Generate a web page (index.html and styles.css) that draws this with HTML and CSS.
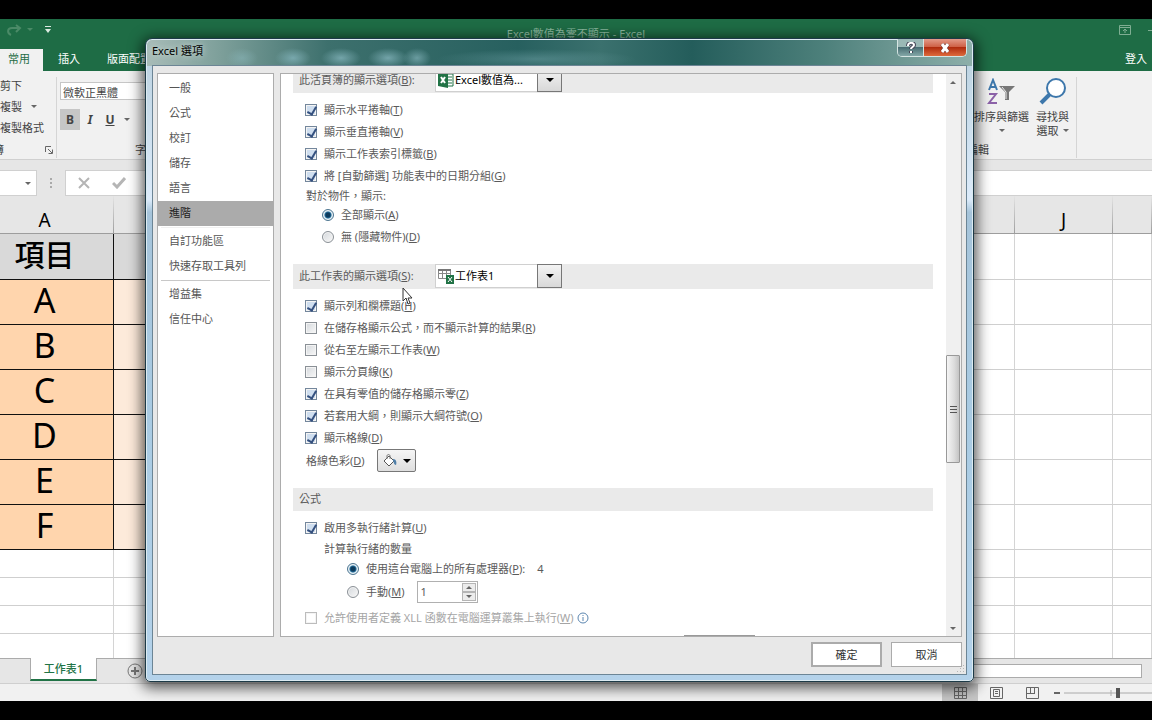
FILE: index.html
```html
<!DOCTYPE html>
<html lang="zh-Hant">
<head>
<meta charset="utf-8">
<title>Excel數值為零不顯示 - Excel</title>
<link rel="stylesheet" href="styles.css">
</head>
<body>
<div class="app">
  <header class="titlebar">
    <div class="quick">
      <svg width="18" height="12" viewBox="0 0 18 12" fill="none" stroke="#4b8a67" stroke-width="2"><path d="M4 11C0 9 0 4 5 4h7M9 1l4 3-4 4"/></svg>
      <i class="caret caret-dim"></i>
      <svg class="quick-more" width="6" height="8" viewBox="0 0 6 8" fill="#dcebe2"><path d="M0 0h6v1H0zM0 3h6L3 7z"/></svg>
    </div>
    <div class="doc-title">Excel數值為零不顯示 - Excel</div>
    <div class="win-tools">
      <svg width="12" height="10" viewBox="0 0 12 10" fill="none" stroke="#7fae93"><path d="M.5 .5h11v9H.5zM.5 2.500h11M6 8V4M4 6l2-2 2 2"/></svg>
      <svg width="4" height="10" viewBox="0 0 4 10"><path d="M0 5h4v1H0z" fill="#7fae93"/></svg>
    </div>
  </header>
  <nav class="tabs">
    <button class="tab tab-on">常用</button>
    <button class="tab">插入</button>
    <button class="tab">版面配置</button>
    <button class="tab signin">登入</button>
  </nav>
  <section class="ribbon">
    <div class="group clip">
      <button class="tool">剪下</button>
      <button class="tool">複製<i class="caret"></i></button>
      <button class="tool">複製格式</button>
      <div class="clip-foot"><span>簿</span>
        <svg width="8" height="8" viewBox="0 0 8 8" fill="none" stroke="#666"><path d="M.5 6V.5H6M3 3l4 4M7.500 3.500v4h-4"/></svg>
      </div>
    </div>
    <div class="group font">
      <input class="font-name" aria-label="字型" value="微軟正黑體">
      <div class="styles">
        <button class="sty sty-b">B</button><button class="sty sty-i">I</button><button class="sty sty-u">U</button><i class="caret"></i>
      </div>
      <div class="font-foot">字型</div>
    </div>
    <div class="group edit">
      <div class="edit-tools">
        <button class="big">
          <svg width="30" height="28" viewBox="0 0 30 28"><g fill="none" stroke-width="2"><path d="M2 12L6 2l4 10M3 9h6" stroke="#3d77ab"/><path d="M2 16h7L2 25h8" stroke="#8c62a8"/></g><path d="M12 8h16l-6 6v8h-4v-8z" fill="#777"/><path d="M15 9l4 5v7" stroke="#eee" fill="none"/></svg>
          <span>排序與篩選</span><i class="caret"></i>
        </button>
        <button class="big">
          <svg width="28" height="28" viewBox="0 0 28 28"><path d="M11 16L2 25" stroke="#3d77ab" stroke-width="4"/><circle cx="17" cy="10" r="9" fill="#fff" stroke="#3d77ab" stroke-width="2"/></svg>
          <span>尋找與</span><span class="with-caret">選取<i class="caret"></i></span>
        </button>
      </div>
      <div class="edit-foot">編輯</div>
    </div>
  </section>
  <section class="formula">
    <div class="name-box"><i class="caret"></i></div>
    <div class="dots"><i></i><i></i><i></i></div>
    <div class="formula-box">
      <svg width="12" height="12" viewBox="0 0 12 12" fill="none" stroke="#b5b5b5" stroke-width="2"><path d="M1 1l10 10M11 1L1 11"/></svg>
      <svg width="14" height="12" viewBox="0 0 14 12" fill="none" stroke="#b5b5b5" stroke-width="3"><path d="M1 6l4 4 8-9"/></svg>
    </div>
  </section>
  <main class="sheet">
    <table class="cells">
      <colgroup><col class="col-a"><col><col><col class="col-j"><col class="col-k"></colgroup>
      <thead><tr><th>A</th><th></th><th></th><th>J</th><th></th></tr></thead>
      <tbody>
        <tr class="row-head"><td>項目</td><td></td><td></td><td></td><td></td></tr>
        <tr class="row-fill"><td>A</td><td></td><td></td><td></td><td></td></tr>
        <tr class="row-fill"><td>B</td><td></td><td></td><td></td><td></td></tr>
        <tr class="row-fill"><td>C</td><td></td><td></td><td></td><td></td></tr>
        <tr class="row-fill"><td>D</td><td></td><td></td><td></td><td></td></tr>
        <tr class="row-fill"><td>E</td><td></td><td></td><td></td><td></td></tr>
        <tr class="row-fill"><td>F</td><td></td><td></td><td></td><td></td></tr>
        <tr><td></td><td></td><td></td><td></td><td></td></tr>
        <tr><td></td><td></td><td></td><td></td><td></td></tr>
        <tr><td></td><td></td><td></td><td></td><td></td></tr>
        <tr><td></td><td></td><td></td><td></td><td></td></tr>
      </tbody>
    </table>
  </main>
  <div class="sheet-tabs">
    <button class="sheet-tab">工作表1</button>
    <svg class="add" width="16" height="16" viewBox="0 0 16 16" fill="none" stroke="#777"><circle cx="8" cy="8" r="7"/><path d="M4 8h8M8 4v8" stroke-width="2"/></svg>
    <div class="hscroll"></div>
  </div>
  <footer class="status">
    <span class="view view-on"><svg width="13" height="12" viewBox="0 0 13 12" fill="none" stroke="#666"><path d="M.5 .5h12v11H.5zM4.500 0v12M8.500 0v12M0 4.500h13M0 8.500h13"/></svg></span>
    <span class="view"><svg width="13" height="12" viewBox="0 0 13 12" fill="none" stroke="#666"><path d="M.5 .5h12v11H.5zM3.500 2.500h6v7h-6zM5 4.500h3M5 6.500h3"/></svg></span>
    <span class="view"><svg width="13" height="12" viewBox="0 0 13 12" fill="none" stroke="#666"><path d="M.5 .5h12v11H.5zM4.500 0v6.500M8.500 0v6.500M0 6.500h9"/></svg></span>
    <svg class="zoom" width="100" height="12" viewBox="0 0 100 12"><path d="M0 5h6v2H0z" fill="#666"/><path d="M10 6h90" stroke="#aaa"/><path d="M57 3v6" stroke="#aaa"/><path d="M62 1h4v10h-4z" fill="#555"/></svg>
  </footer>
</div>

<div class="dialog" role="dialog" aria-label="Excel 選項">
  <div class="dlg-title"><span>Excel 選項</span>
    <div class="caption"><button class="cap-help" aria-label="說明"><svg width="10" height="12" viewBox="0 0 10 12" fill="none"><path d="M2 4c0-4 6-4 6-1 0 2-3 2-3 4M5 9v2" stroke="#445" stroke-width="4"/><path d="M2 4c0-4 6-4 6-1 0 2-3 2-3 4M5 9v2" stroke="#fff" stroke-width="2"/></svg></button><button class="cap-close" aria-label="關閉"><svg width="12" height="10" viewBox="0 0 12 10"><path d="M3 1l6 8M9 1L3 9" stroke="#633" stroke-width="4"/><path d="M3 1l6 8M9 1L3 9" stroke="#fff" stroke-width="3"/></svg></button></div>
  </div>
  <div class="client">
    <div class="panes">
      <nav class="nav">
        <button>一般</button><button>公式</button><button>校訂</button><button>儲存</button><button>語言</button><button class="on">進階</button>
        <hr class="faint">
        <button>自訂功能區</button><button>快速存取工具列</button>
        <hr>
        <button>增益集</button><button>信任中心</button>
      </nav>
      <div class="content">
        <form class="options">
          <div class="band band-first"><label for="book">此活頁簿的顯示選項(<u>B</u>):</label>
            <div class="combo">
              <svg width="16" height="16" viewBox="0 0 16 16"><path d="M9 2h6v12H9z" fill="#fff" stroke="#217346"/><path d="M10 5h4M10 8h4M10 11h4" stroke="#217346"/><path d="M0 2l10-2v16L0 14z" fill="#217346"/><path d="M3 5l4 6M7 5l-4 6" stroke="#fff" stroke-width="2"/></svg>
              <select id="book"><option>Excel數值為...</option></select><span class="drop"><i class="caret caret-black"></i></span>
            </div>
          </div>
          <div class="rows">
            <label class="row"><input type="checkbox" checked>顯示水平捲軸(<u>T</u>)</label>
            <label class="row"><input type="checkbox" checked>顯示垂直捲軸(<u>V</u>)</label>
            <label class="row"><input type="checkbox" checked>顯示工作表索引標籤(<u>B</u>)</label>
            <label class="row"><input type="checkbox" checked>將 [自動篩選] 功能表中的日期分組(<u>G</u>)</label>
            <div class="note">對於物件，顯示:</div>
            <label class="row sub"><input type="radio" name="obj" checked>全部顯示(<u>A</u>)</label>
            <label class="row sub"><input type="radio" name="obj">無 (隱藏物件)(<u>D</u>)</label>
          </div>
          <div class="band"><label for="wsheet">此工作表的顯示選項(<u>S</u>):</label>
            <div class="combo">
              <svg width="16" height="16" viewBox="0 0 16 16"><path d="M.5 1.500h12v9H.5zM4.500 2v9M8.500 2v9M0 5.500h12" fill="#fff" stroke="#888"/><path d="M0 1h13v2H0z" fill="#777"/><path d="M8 7h8v9H8z" fill="#217346"/><path d="M10 9l4 5M14 9l-4 5" stroke="#fff"/></svg>
              <select id="wsheet"><option>工作表1</option></select><span class="drop"><i class="caret caret-black"></i></span>
            </div>
          </div>
          <div class="rows">
            <label class="row"><input type="checkbox" checked>顯示列和欄標題(<u>H</u>)</label>
            <label class="row"><input type="checkbox">在儲存格顯示公式，而不顯示計算的結果(<u>R</u>)</label>
            <label class="row"><input type="checkbox">從右至左顯示工作表(<u>W</u>)</label>
            <label class="row"><input type="checkbox">顯示分頁線(<u>K</u>)</label>
            <label class="row"><input type="checkbox" checked>在具有零值的儲存格顯示零(<u>Z</u>)</label>
            <label class="row"><input type="checkbox" checked>若套用大綱，則顯示大綱符號(<u>O</u>)</label>
            <label class="row"><input type="checkbox" checked>顯示格線(<u>D</u>)</label>
            <div class="color-row"><span>格線色彩(<u>D</u>)</span>
              <button type="button" class="color" aria-label="格線色彩"><svg width="16" height="14" viewBox="0 0 16 14" fill="none"><path d="M2 7l5-5 5 5-5 5z" fill="#fff" stroke="#555"/><path d="M5 5V2c0-2 3-2 3 0v3" stroke="#777"/><path d="M11 5c3 0 4 3 3 6-2 0-2-3-3-4z" fill="#4f7fa8"/></svg><i class="caret caret-black"></i></button>
            </div>
          </div>
          <div class="band band-plain">公式</div>
          <div class="rows rows-last">
            <label class="row"><input type="checkbox" checked>啟用多執行緒計算(<u>U</u>)</label>
            <div class="note note-in">計算執行緒的數量</div>
            <label class="row sub-in"><input type="radio" name="thr" checked>使用這台電腦上的所有處理器(<u>P</u>):<span class="count">4</span></label>
            <div class="row sub-in manual"><input type="radio" name="thr" id="man"><label for="man">手動(<u>M</u>)</label>
              <div class="spin"><input type="text" value="1" aria-label="執行緒數量"><div class="spin-btns"><button type="button" aria-label="增加"><i class="caret up"></i></button><button type="button" aria-label="減少"><i class="caret"></i></button></div></div>
            </div>
            <label class="row off"><input type="checkbox" disabled>允許使用者定義 XLL 函數在電腦運算叢集上執行(<u>W</u>)
              <svg width="12" height="12" viewBox="0 0 12 12" fill="none" stroke="#5b86b0"><circle cx="6" cy="6" r="5"/><path d="M6 5v4M6 3v1"/></svg></label>
            <div class="next-edge"></div>
          </div>
        </form>
        <div class="scroll"><i class="caret up"></i><div class="thumb"><i></i><i></i><i></i></div><i class="caret"></i></div>
      </div>
    </div>
    <div class="actions"><button class="ok">確定</button><button>取消</button></div>
    <svg class="grip" width="8" height="8" viewBox="0 0 8 8" fill="#b5b5b5"><path d="M6 0h1v1H6zM3 3h1v1H3zM6 3h1v1H6zM0 6h1v1H0zM3 6h1v1H3zM6 6h1v1H6z"/></svg>
  </div>
</div>
<svg class="pointer" width="12" height="18" viewBox="0 0 12 18"><path d="M1 1v13l3-3 2 6 2-1-2-5h4z" fill="#fff" stroke="#333"/></svg>
</body>
</html>
```
FILE: styles.css
```css
* { box-sizing: border-box; }
body {
  margin: 0;
  height: 100vh;
  padding: 19px 0;
  background: #000;
  position: relative;
  overflow: hidden;
  font: 11px/16px "Noto Sans", "Noto Sans CJK TC", sans-serif;
  color: #444;
}
button, input, select {
  font: inherit;
  color: inherit;
  border: 0;
  background: none;
  padding: 0;
  margin: 0;
  border-radius: 0;
}
svg { display: block; flex: none; }
.caret {
  display: inline-block;
  flex: none;
  border: 3px solid transparent;
  border-top-color: #666;
  border-bottom: 0;
}
.caret.up { border-top: 0; border-bottom: 3px solid #666; }
.caret-dim { border-top-color: #4b8a67; }
.caret-black { border-width: 4px 4px 0; border-top-color: #000; }

.app {
  height: 100%;
  display: flex;
  flex-direction: column;
  overflow: hidden;
  background: #e6e6e6;
}
.titlebar {
  height: 30px;
  flex: none;
  display: grid;
  grid-template-columns: 1fr auto 1fr;
  align-items: center;
  background: #1e6c45;
  color: #8dbaa0;
}
.quick, .win-tools { display: flex; align-items: center; padding-bottom: 9px; }
.quick { padding-left: 7px; gap: 2px; }
.quick-more { margin-left: 10px; }
.win-tools { justify-content: flex-end; gap: 17px; }
.tabs { height: 22px; flex: none; display: flex; background: #1e6c45; }
.tab { color: #fff; padding: 0 10px 2px 5px; margin-left: 10px; white-space: nowrap; }
.tab-on { background: #f1f1f1; color: #1e6c45; width: 43px; margin: 0; padding: 0 5px 2px 0; }
.tab:nth-child(3) { margin-left: 12px; }
.signin { margin-left: auto; padding: 0 5px 2px; }

.ribbon {
  height: 89px;
  flex: none;
  display: flex;
  padding: 6px 0 1px;
  background: #f1f1f1;
  border-bottom: 1px solid #d0d0d0;
}
.group { display: flex; flex-direction: column; border-right: 1px solid #d5d5d5; }
.clip { width: 57px; align-items: flex-start; overflow: hidden; }
.tool { height: 22px; display: flex; align-items: center; gap: 9px; white-space: nowrap; margin-top: -2px; }
.tool:nth-child(n+2) { margin-top: 0; }
.clip-foot { display: flex; align-items: center; margin: 4px 0 0 -7px; gap: 41px; }
.font { width: 120px; padding-left: 3px; border: 0; }
.font-name { width: 100%; height: 22px; margin-top: 5px; border: 1px solid #c6c6c6; background: #fff; padding: 1px 2px 0; }
.styles { display: flex; align-items: center; margin-top: 7px; }
.sty { width: 20px; height: 21px; font-size: 12px; font-weight: 700; }
.sty-b { background: #c6c6c6; }
.sty-i { font-style: italic; }
.sty-u { text-decoration: underline; margin-right: 4px; }
.font-name + .styles { margin-top: 7px; padding-top: 2px; }
.font-foot { padding: 12px 0 0 75px; }
.edit { margin-left: auto; margin-right: 75px; }
.edit-tools { display: flex; gap: 7px; height: 65px; }
.big { display: flex; flex-direction: column; align-items: center; line-height: 14px; white-space: nowrap; }
.big svg { margin: 1px 0 4px; }
.big .caret { margin-top: 5px; }
.big .with-caret .caret { margin: 0 0 3px 4px; }
.big:last-child { padding-right: 7px; }
.edit-foot { margin: 4px 0 0 -7px; }

.formula { height: 36px; flex: none; display: flex; padding: 10px 0 0; }
.name-box { width: 37px; background: #fff; border: 1px solid #d0d0d0; border-left: 0; display: flex; align-items: center; justify-content: flex-end; padding-right: 5px; }
.dots { width: 28px; display: flex; flex-direction: column; align-items: center; justify-content: center; gap: 2px; }
.dots i { width: 2px; height: 2px; background: #aaa; }
.formula-box { flex: 1; background: #fff; border: 1px solid #d0d0d0; border-right: 0; display: flex; align-items: center; gap: 22px; padding-left: 12px; }

.sheet { flex: 1; min-height: 0; overflow: hidden; background: #fff; }
.cells { width: 100%; table-layout: fixed; border-collapse: separate; border-spacing: 0; color: #000; }
.col-a { width: 114px; }
.col-j { width: 98px; }
.col-k { width: 39px; }
.cells th {
  height: 38px;
  padding: 10px 24px 0 0;
  font-size: 19px;
  font-weight: 400;
  line-height: 24px;
  border-right: 1px solid;
  border-bottom: 1px solid #9c9c9c;
  border-image: linear-gradient(#e6e6e6, #9c9c9c) 1;
  background: #e6e6e6;
}
.cells th:nth-child(4) { padding-right: 0; }
.cells td {
  height: 28px;
  padding: 0 24px 4px 0;
  border-right: 1px solid #d4d4d4;
  border-bottom: 1px solid #cfcfcf;
  text-align: center;
  font-size: 34px;
  line-height: 38px;
}
.row-head td, .row-fill td { height: 45px; }
.cells .row-head td { height: 46px; font-size: 30px; font-weight: 500; }
.row-head td:nth-child(-n+2), .row-fill td:nth-child(-n+2) { border-color: #111; }
.row-head td:nth-child(-n+2) { background: #d9d9d9; }
.row-fill td:nth-child(1) { background: #ffd5ad; }
.row-fill td:nth-child(2) { background: #fdeada; }

.sheet-tabs { height: 26px; flex: none; display: flex; border-top: 1px solid #ababab; border-bottom: 1px solid #cfcfcf; padding-left: 30px; }
.sheet-tab { width: 67px; height: 23px; margin-top: -1px; background: #fff; color: #217346; font-weight: 500; border: 1px solid #ababab; border-top: 0; border-bottom: 2px solid #217346; }
.add { margin: 4px 0 0 30px; }
.hscroll { width: 220px; height: 14px; margin: 5px 10px 0 auto; background: #fff; border: 1px solid #ababab; }
.status { height: 17px; flex: none; display: flex; justify-content: flex-end; align-items: center; background: #f1f1f1; overflow: hidden; }
.view { width: 36px; height: 17px; display: flex; align-items: center; justify-content: center; }
.view-on { background: #c6c6c6; }
.zoom { margin: 0 -2px 0 4px; }

.dialog {
  position: absolute;
  inset: 38px 178px 38px 145px;
  display: flex;
  flex-direction: column;
  padding: 0 6px 6px;
  border: 1px solid #1d3a47;
  border-radius: 7px 7px 5px 5px;
  box-shadow: 0 3px 14px 3px rgba(0, 0, 0, .65), inset 0 0 0 1px #dcebf2;
  background:
    radial-gradient(ellipse 16px 10px at 96px 19px, rgba(140, 185, 190, .5), transparent),
    radial-gradient(ellipse 18px 10px at 147px 19px, rgba(130, 178, 185, .8), transparent),
    radial-gradient(ellipse 20px 10px at 195px 19px, rgba(130, 178, 185, .8), transparent),
    radial-gradient(ellipse 20px 10px at 242px 19px, rgba(130, 178, 185, .8), transparent),
    radial-gradient(ellipse 14px 10px at 271px 19px, rgba(130, 178, 185, .7), transparent),
    radial-gradient(ellipse 100px 10px at 390px 20px, rgba(110, 160, 165, .5), transparent),
    linear-gradient(90deg, #a8bcb8 0, #7d9f9a 9%, #3d706d 22%, #27605f 45%, #3b716e 55%, #245d5b 66%, #4d807b 82%, #8eafaa 100%) 0 0 / 100% 27px no-repeat,
    linear-gradient(#b9d0de 0, #dcebfa 25%, #a6c4da 27%, #a9cbe3 60%, #b4d2ea 100%);
}
.dlg-title { height: 26px; flex: none; display: flex; justify-content: space-between; align-items: flex-start; color: #000; }
.dlg-title span { padding-top: 4px; text-shadow: 0 0 6px #dfe9e6; }
.caption { display: flex; height: 18px; border: 1px solid #d5e5e3; border-top: 0; border-radius: 0 0 5px 5px; overflow: hidden; }
.caption button { display: flex; align-items: center; justify-content: center; }
.cap-help { width: 26px; background: linear-gradient(#9ab8b5 45%, #496e73 50%, #84a8a8); border-right: 1px solid #d5e5e3; }
.cap-close { width: 42px; background: linear-gradient(#e39a88 0, #cf6247 45%, #b02c0e 50%, #de6a3c); }

.client {
  flex: 1;
  min-height: 0;
  position: relative;
  display: flex;
  flex-direction: column;
  padding: 7px 4px 0;
  background: #e8e8e8;
  border: 1px solid #6c8595;
}
.panes { flex: 1; min-height: 0; display: flex; gap: 6px; }
.nav { width: 117px; flex: none; display: flex; flex-direction: column; background: #fff; border: 1px solid #acacac; padding-top: 2px; }
.nav button { height: 25px; flex: none; padding: 0 0 1px 11px; text-align: left; color: #555; }
.nav .on { background: #ababab; color: #222; }
.nav hr { width: 109px; margin: 1px auto; border: 0; border-top: 1px solid #c8c8c8; }
.nav .faint { border-color: #f0f0f0; }
.content { flex: 1; min-width: 0; display: flex; background: #fff; border: 1px solid #acacac; overflow: hidden; }
.options { flex: 1; min-width: 0; overflow: hidden; padding: 0 13px 0 12px; color: #5a5a5a; }
.band { height: 25px; display: flex; align-items: center; padding: 0 6px 1px; background: #eaeaea; }
.band label { width: 136px; white-space: nowrap; }
.band-first { margin-top: -6px; }
.band-plain { height: 23px; padding-bottom: 2px; }
.combo { width: 127px; height: 24px; display: flex; align-items: center; background: #fff; border: 1px solid #d0d0d0; padding-left: 2px; color: #000; }
.combo select { flex: 1; min-width: 0; appearance: none; padding-left: 1px; }
.drop { width: 25px; height: 24px; display: flex; align-items: center; justify-content: center; margin-right: -1px; border: 1px solid #777; background: linear-gradient(#f3f3f3, #d8d8d8); }
.rows { padding: 6px 0 16px 12px; }
.row { height: 22px; display: flex; align-items: center; white-space: nowrap; }
.note { line-height: 17px; padding-left: 1px; }
.sub { padding-left: 17px; }
.note-in { line-height: 20px; padding-left: 19px; }
.sub-in { height: 20px; padding-left: 42px; }
.manual { height: 26px; }
.count { margin-left: 12px; }
input[type="checkbox"], input[type="radio"] {
  appearance: none;
  flex: none;
  width: 12px;
  height: 12px;
  margin-right: 7px;
  border: 1px solid #8a9096;
  background: linear-gradient(135deg, #d4d8dc, #f8f8f8);
  box-shadow: inset 0 0 0 1px #f4f4f4;
}
input[type="radio"] { border-radius: 50%; }
input[type="checkbox"]:checked { background: #cfdeef; border-color: #74879c; }
input[type="checkbox"]:checked::before {
  content: "";
  display: block;
  width: 4px;
  height: 8px;
  margin-left: 3px;
  border: solid #34507f;
  border-width: 0 2px 2px 0;
  transform: rotate(30deg);
}
input[type="radio"]:checked { border-color: #4d7590; background: radial-gradient(circle, #0c3a5c 0 2px, #246a96 3px, #c5e2f2 4px); }
input[type="checkbox"]:disabled { background: #fff; border-color: #bcbcbc; }
.color-row { height: 23px; display: flex; align-items: center; gap: 12px; padding-left: 1px; }
.color { width: 39px; height: 23px; display: flex; align-items: center; justify-content: center; gap: 5px; border: 1px solid #777; border-radius: 2px; background: linear-gradient(#f5f5f5, #dedede); }
.spin { width: 61px; height: 22px; margin-left: 12px; display: flex; border: 1px solid #b0b0b0; padding: 1px; }
.spin input { flex: 1; min-width: 0; padding-left: 2px; }
.spin-btns { width: 14px; display: flex; flex-direction: column; }
.spin-btns button { flex: 1; display: flex; align-items: center; justify-content: center; border: 1px solid #b5b5b5; background: #ececec; }
.off { height: 26px; color: #a5a5a5; }
.off svg { margin-left: 3px; }
.next-edge { width: 71px; height: 22px; margin: 4px 0 0 379px; border: 1px solid #999; }
.scroll { width: 15px; flex: none; display: flex; flex-direction: column; align-items: center; background: #f0f0f0; padding: 7px 1px 6px 0; }
.thumb { width: 14px; height: 108px; margin: 271px 0 auto; display: flex; flex-direction: column; align-items: center; justify-content: center; gap: 2px; border: 1px solid #999; border-radius: 1px; background: linear-gradient(90deg, #f5f5f5, #dcdcdc 60%, #c4c4c4); }
.thumb i { width: 7px; height: 1px; background: #555; }
.actions { height: 37px; flex: none; display: flex; justify-content: flex-end; gap: 9px; padding: 5px 0 7px; }
.actions button { width: 71px; background: #fff; border: 1px solid #ababab; color: #333; }
.actions .ok { border: 2px solid #ababab; }
.grip { position: absolute; right: 1px; bottom: 1px; }
.pointer { position: absolute; left: 402px; top: 287px; }
```
